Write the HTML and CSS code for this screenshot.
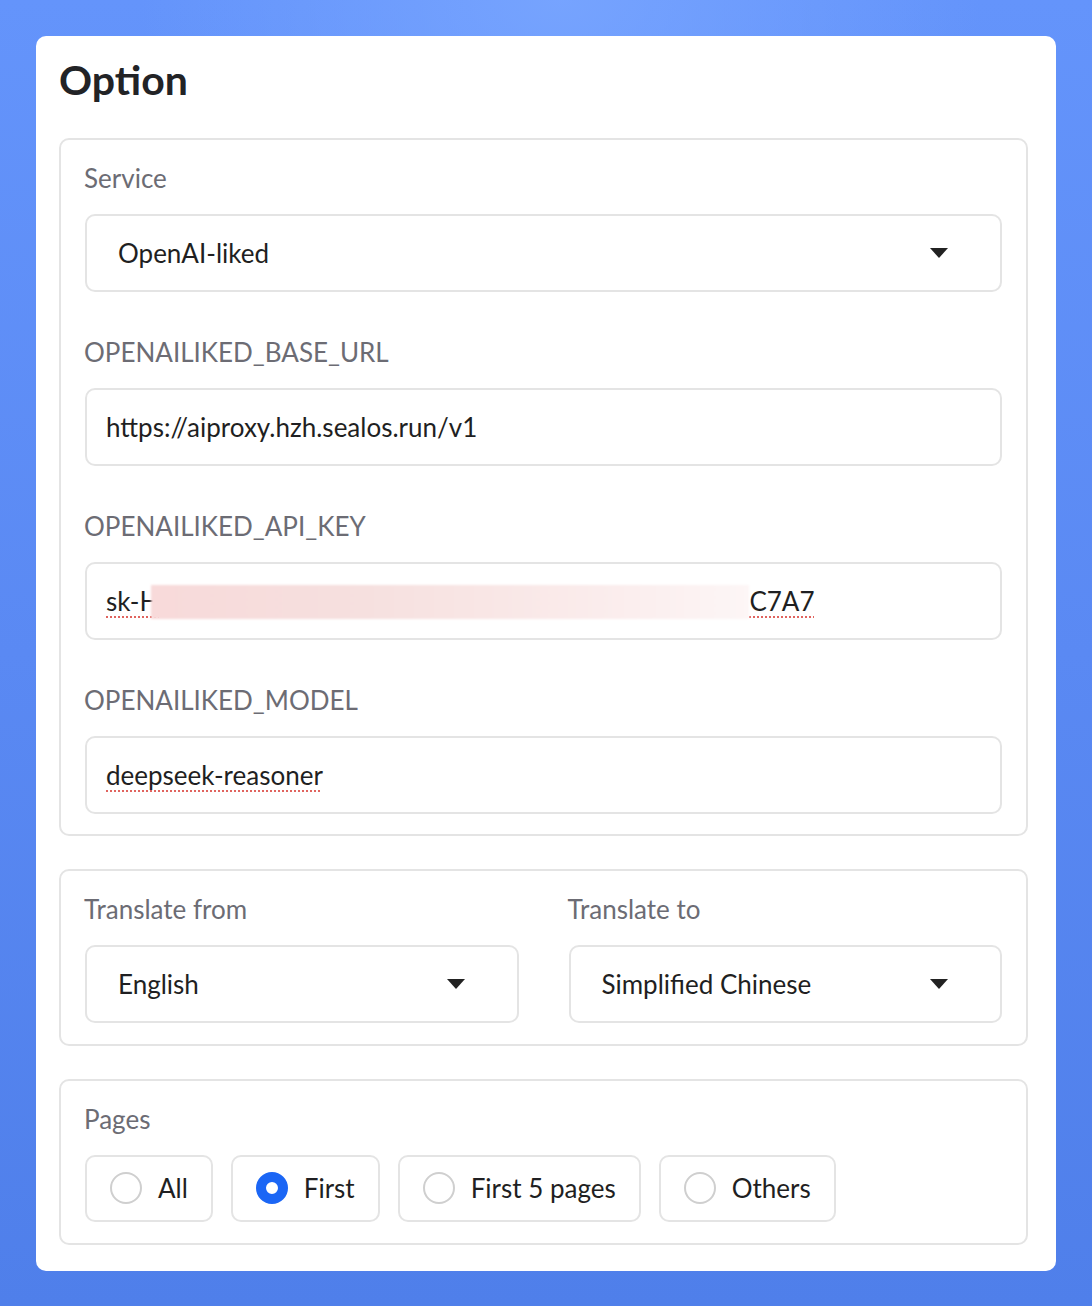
FILE: index.html
```html
<!DOCTYPE html>
<html lang="en">
<head>
<meta charset="utf-8">
<title>Option</title>
<link rel="stylesheet" href="styles.css">
</head>
<body>
<div class="card">
  <h1 class="title">Option</h1>

  <div class="group">
    <div class="field">
      <div class="label">Service</div>
      <div class="select"><span>OpenAI-liked</span><span class="caret"></span></div>
    </div>
    <div class="field">
      <div class="label">OPENAILIKED_BASE_URL</div>
      <div class="input">https://aiproxy.hzh.sealos.run/v1</div>
    </div>
    <div class="field">
      <div class="label">OPENAILIKED_API_KEY</div>
      <div class="input"><span class="spell">sk-H</span><span class="blur"></span><span class="spell">C7A7</span></div>
    </div>
    <div class="field">
      <div class="label">OPENAILIKED_MODEL</div>
      <div class="input"><span class="spell">deepseek-reasoner</span></div>
    </div>
  </div>

  <div class="group cols">
    <div class="field">
      <div class="label">Translate from</div>
      <div class="select"><span>English</span><span class="caret"></span></div>
    </div>
    <div class="field">
      <div class="label">Translate to</div>
      <div class="select"><span>Simplified Chinese</span><span class="caret"></span></div>
    </div>
  </div>

  <div class="group pages">
    <div class="label">Pages</div>
    <div class="radios">
      <div class="radio"><span class="dot"></span><span>All</span></div>
      <div class="radio"><span class="dot on"></span><span>First</span></div>
      <div class="radio"><span class="dot"></span><span>First 5 pages</span></div>
      <div class="radio"><span class="dot"></span><span>Others</span></div>
    </div>
  </div>
</div>
</body>
</html>
```

FILE: styles.css
```css
html, body {
  margin: 0;
  padding: 0;
}
body {
  width: 1092px;
  height: 1306px;
  box-sizing: border-box;
  padding: 36px 36px;
  font-family: "Source Sans Pro", "Lato", "Noto Sans", sans-serif;
  background:
    radial-gradient(ellipse 420px 260px at 560px 0px, rgba(120,165,255,0.9), rgba(120,165,255,0) 100%),
    linear-gradient(180deg, #6494fb 0%, #5a89f3 50%, #4f7fea 100%);
  overflow: hidden;
}
.card {
  background: #ffffff;
  border-radius: 10px;
  padding: 14px 28px 26px 23px;
  display: flex;
  flex-direction: column;
  gap: 33px;
}
.title {
  margin: 0 0 -5.5px 0;
  font-size: 41px;
  line-height: 60px;
  font-weight: 700;
  color: #222326;
}
.group {
  border: 2px solid #e4e4e4;
  border-radius: 10px;
  padding: 20px 24px 20.5px 24px;
  display: flex;
  flex-direction: column;
  gap: 42px;
}
.group.cols {
  display: grid;
  grid-template-columns: 1fr 1fr;
  column-gap: 50px;
  padding-bottom: 20.5px;
}
.field {
  display: flex;
  flex-direction: column;
  gap: 18px;
}
.label {
  font-size: 26px;
  line-height: 36px;
  color: #6c6c74;
  margin-left: -1px;
}
.select, .input {
  box-sizing: border-box;
  height: 78px;
  border: 2px solid #e4e4e4;
  border-radius: 10px;
  display: flex;
  align-items: center;
  font-size: 26px;
  color: #1f1f22;
}
.select {
  padding: 0 52px 0 31px;
  justify-content: space-between;
}
.input {
  padding: 0 19px;
}
.caret {
  width: 0;
  height: 0;
  border-left: 9px solid transparent;
  border-right: 9px solid transparent;
  border-top: 10px solid #222;
}
.spell {
  text-decoration: underline dotted #e0645f;
  text-decoration-thickness: 2px;
  text-underline-offset: 6px;
}
.blur {
  display: inline-block;
  width: 598px;
  height: 34px;
  margin-top: 2px;
  margin-left: -8px;
  background: linear-gradient(90deg, #f8dada 0%, #f6e0df 35%, #f9e6e5 55%, #fbeeee 80%, #fdf6f6 100%);
  filter: blur(1px);
}
.pages {
  gap: 18px;
  padding-bottom: 21.5px;
}
.radios {
  display: flex;
  gap: 18px;
}
.radio {
  box-sizing: border-box;
  height: 67px;
  border: 2px solid #e4e4e4;
  border-radius: 10px;
  padding: 0 23px 0 23px;
  display: flex;
  align-items: center;
  gap: 16px;
  font-size: 26px;
  color: #1f1f22;
}
.dot {
  box-sizing: border-box;
  width: 32px;
  height: 32px;
  border-radius: 50%;
  border: 2px solid #cfcfcf;
  background: #fff;
}
.dot.on {
  border: 10px solid #1b66f5;
  background: #fff;
}
```
